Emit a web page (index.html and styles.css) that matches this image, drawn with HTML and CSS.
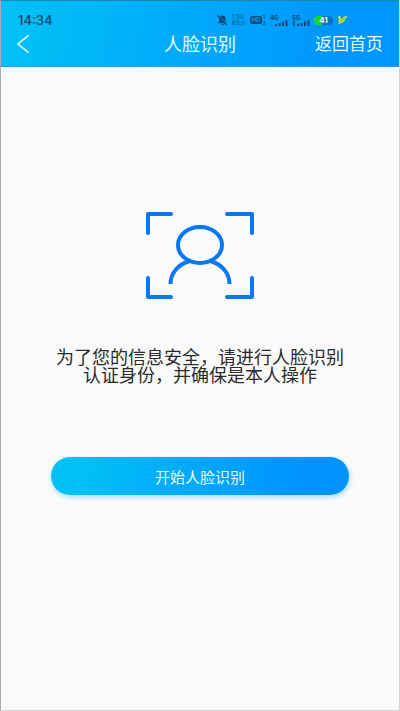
FILE: index.html
```html
<!DOCTYPE html>
<html lang="zh-CN">
<head>
<meta charset="utf-8">
<meta name="viewport" content="width=device-width, initial-scale=1">
<title>人脸识别</title>
<link rel="stylesheet" href="styles.css">
</head>
<body>
<header class="top">
  <div class="status">
    <span class="time">14:34</span>
    <div class="indicators">
      <svg class="bell" width="11" height="12" viewBox="0 0 11 12" aria-hidden="true">
        <path d="M1 9.2 2.2 7.6V4.8C2.2 3 3.6 1.6 5.4 1.6S8.6 3 8.6 4.8V7.6L9.8 9.2Z" fill="currentColor"/>
        <path d="M4 10h3L5.500 11.300Z" fill="currentColor"/>
        <path d="M1.400 0.800 10.600 10.400" stroke="#00acfb" stroke-width="1"/>
        <path d="M.6 1.400 9.800 11.200" stroke="currentColor" stroke-width="1.200"/>
      </svg>
      <span class="speed"><span>1.90</span><span>KB/s</span></span>
      <span class="volte"><span class="hd">HD</span><span class="sims"><span>1</span><span>2</span></span></span>
      <span class="signal">
        <span class="net">4G</span>
        <svg width="18" height="11" viewBox="0 0 18 11" fill="currentColor" aria-hidden="true"><path d="M5 9h2v2H5zM8.500 8h2v3h-2zM12 6.500h2V11h-2zM15.500 5h2v6h-2z"/></svg>
      </span>
      <span class="signal">
        <span class="net">5G</span>
        <svg width="18" height="11" viewBox="0 0 18 11" fill="currentColor" aria-hidden="true"><path d="M1 6h1.500v5H1zM5 9h2v2H5zM8.500 8h2v3h-2zM12 6.500h2V11h-2zM15.500 5h2v6h-2z"/></svg>
      </span>
      <span class="battery">41</span>
      <svg class="leaf" width="11" height="10" viewBox="0 0 11 10" aria-hidden="true">
        <path d="M.8 1.500 4 1 3.600 4.600 7 1.600 10.800 1 8.500 4 6.500 5 8.500 5.200 5 8 1 9 2 5.500Z" fill="#c5df3e"/>
        <path d="M3 7.200 7.500 3" stroke="#3c8f68" stroke-width=".6"/>
      </svg>
    </div>
  </div>
  <nav class="bar">
    <button class="back" type="button" aria-label="返回">
      <svg width="12" height="18" viewBox="0 0 12 18" fill="none" stroke="#e4fbff" stroke-width="1.500" aria-hidden="true"><path d="M11.500.3 1 9l10.500 8.700"/></svg>
    </button>
    <h1 class="title">人脸识别</h1>
    <a class="home" href="#">返回首页</a>
  </nav>
</header>
<main class="content">
  <svg class="face" width="110" height="90" viewBox="0 0 110 90" fill="none" stroke="#0877f5" aria-hidden="true">
    <g stroke-width="4" stroke-linecap="round" stroke-linejoin="round">
      <path d="M26 4H3V23M82 4h25V23M3 68V87H26M107 68V87H82"/>
    </g>
    <ellipse cx="55" cy="35" rx="22" ry="18" stroke-width="4"/>
    <path d="M44.500 51C33 54.500 25.500 63 25.500 74M65.500 51C77 54.500 84.500 63 84.500 74" stroke-width="4"/>
  </svg>
  <p class="hint">为了您的信息安全，请进行人脸识别<br>认证身份，并确保是本人操作</p>
  <button class="start" type="button">开始人脸识别</button>
</main>
</body>
</html>
```
FILE: styles.css
```css
* {
  box-sizing: border-box;
}

body {
  margin: 0;
  min-height: 100vh;
  background: #fafafa;
  border-left: 1px solid #aaa;
  border-right: 1px solid #d4d4d4;
  border-bottom: 1px solid #d4d4d4;
  color: #2b2b2b;
  font-family: "Noto Sans", "Noto Sans CJK SC", sans-serif;
}

button {
  border: 0;
  padding: 0;
  font-family: inherit;
  cursor: pointer;
}

.top {
  padding: 11px 16px 6px;
  border-top: 1px solid #1787b4;
  border-bottom: 1px solid #1ba0d8;
  background: linear-gradient(100deg, #00c0f5 5%, #0095ff 85%);
}

.status {
  display: flex;
  align-items: center;
  justify-content: space-between;
  height: 16px;
  padding: 0 35px 0 1px;
  color: #08466f;
  font-family: Inter, sans-serif;
}

.time {
  font-size: 13px;
  font-weight: 500;
  line-height: 16px;
}

.indicators {
  display: flex;
  align-items: center;
  gap: 4px;
}

.speed,
.sims {
  display: flex;
  flex-direction: column;
  font-size: 6px;
  line-height: 6px;
}

.speed {
  width: 14px;
  color: #085f94;
  font-weight: 500;
}

.volte {
  display: flex;
  align-items: center;
  gap: 1px;
}

.hd {
  width: 12px;
  border-radius: 2px;
  background: #08466f;
  color: #08a5ee;
  font-size: 6px;
  font-weight: 700;
  line-height: 8px;
  text-align: center;
}

.sims {
  font-size: 5px;
  font-weight: 700;
}

.signal {
  display: grid;
  align-items: end;
}

.signal > * {
  grid-area: 1 / 1;
}

.net {
  align-self: start;
  font-size: 6px;
  font-weight: 700;
  line-height: 5px;
}

.battery {
  width: 19px;
  border-radius: 4px;
  background: linear-gradient(90deg, #12d632 41%, #0872bc 41%);
  color: #fff;
  font-size: 8px;
  font-weight: 700;
  line-height: 9px;
  text-align: center;
}

.bar {
  display: grid;
  grid-template-columns: 1fr auto 1fr;
  align-items: center;
  height: 32px;
  color: #e4fbff;
}

.back {
  display: flex;
  justify-self: start;
  background: none;
}

.title {
  margin: 0;
  font-size: 18px;
  font-weight: 400;
  line-height: 24px;
}

.home {
  justify-self: end;
  color: inherit;
  font-size: 17px;
  line-height: 24px;
  text-decoration: none;
}

.content {
  display: flex;
  flex-direction: column;
  align-items: center;
  padding: 143px 50px 40px;
}

.hint {
  margin: 48px 0 0;
  font-size: 18px;
  line-height: 18px;
  text-align: center;
  white-space: nowrap;
}

.start {
  width: 100%;
  height: 38px;
  margin-top: 73px;
  border-radius: 19px;
  background: linear-gradient(100deg, #00c0f5 10%, #0092ff 85%);
  box-shadow: 1px 2px 5px #9fdcff;
  color: #e9fbff;
  font-size: 15px;
}
```
